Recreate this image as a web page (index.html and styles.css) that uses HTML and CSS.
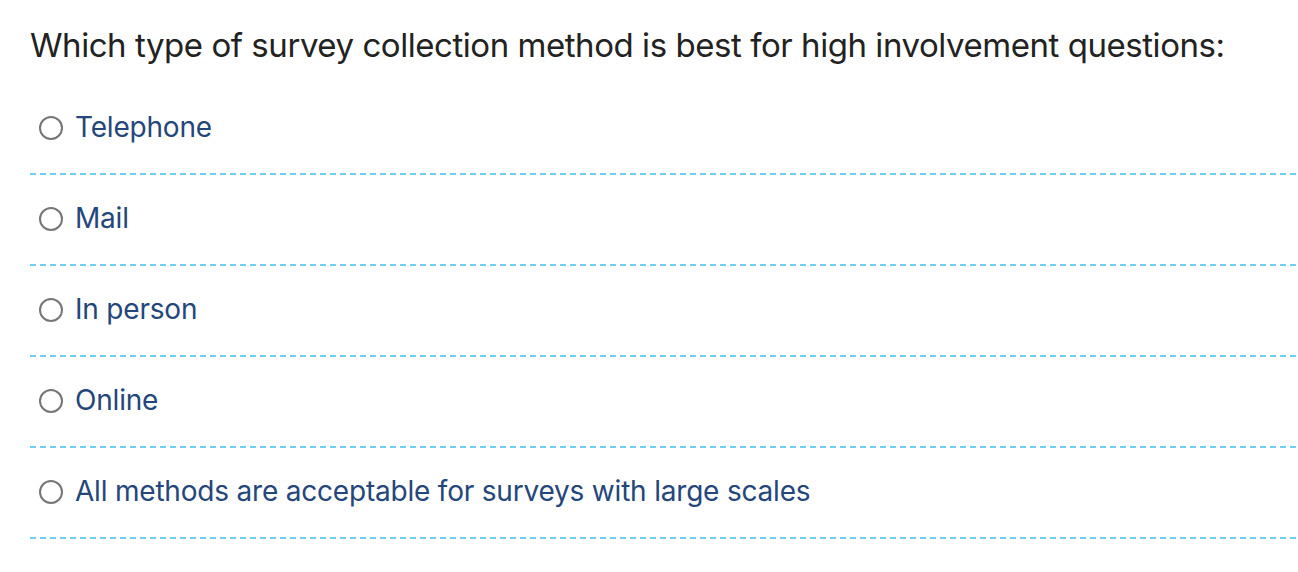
FILE: index.html
```html
<!DOCTYPE html>
<html lang="en">
<head>
<meta charset="utf-8">
<title>Survey question</title>
<link rel="stylesheet" href="styles.css">
</head>
<body>
<div class="question">
  <h1 class="prompt">Which type of survey collection method is best for high involvement questions:</h1>
  <ul class="options">
    <li class="option"><label class="choice"><span class="radio"></span><span class="label">Telephone</span></label></li>
    <li class="option"><label class="choice"><span class="radio"></span><span class="label">Mail</span></label></li>
    <li class="option"><label class="choice"><span class="radio"></span><span class="label">In person</span></label></li>
    <li class="option"><label class="choice"><span class="radio"></span><span class="label">Online</span></label></li>
    <li class="option"><label class="choice"><span class="radio"></span><span class="label">All methods are acceptable for surveys with large scales</span></label></li>
  </ul>
</div>
</body>
</html>
```

FILE: styles.css
```css
html, body {
  margin: 0;
  padding: 0;
  background: #ffffff;
}

body {
  font-family: Inter, "Noto Sans", "Liberation Sans", sans-serif;
}

.question {
  padding: 25px 0 0 30px;
}

.prompt {
  margin: 0 0 19px 0;
  font-size: 33px;
  line-height: 40px;
  font-weight: 400;
  color: #222222;
  letter-spacing: -0.45px;
}

.options {
  list-style: none;
  margin: 0;
  padding: 0;
}

.option {
  padding: 27px 0 32px 0;
  background-image: repeating-linear-gradient(to right, #72cdf4 0, #72cdf4 6px, transparent 6px, transparent 10px);
  background-size: 100% 2px;
  background-repeat: no-repeat;
  background-position: left bottom;
}

.choice {
  display: flex;
  align-items: center;
  gap: 12px;
  line-height: 32px;
}

.radio {
  box-sizing: border-box;
  width: 24px;
  height: 24px;
  margin-left: 9px;
  border: 2px solid #767676;
  border-radius: 50%;
  flex: none;
  margin-top: 2px;
}

.label {
  font-size: 28px;
  color: #24467a;
  letter-spacing: -0.2px;
}
```
